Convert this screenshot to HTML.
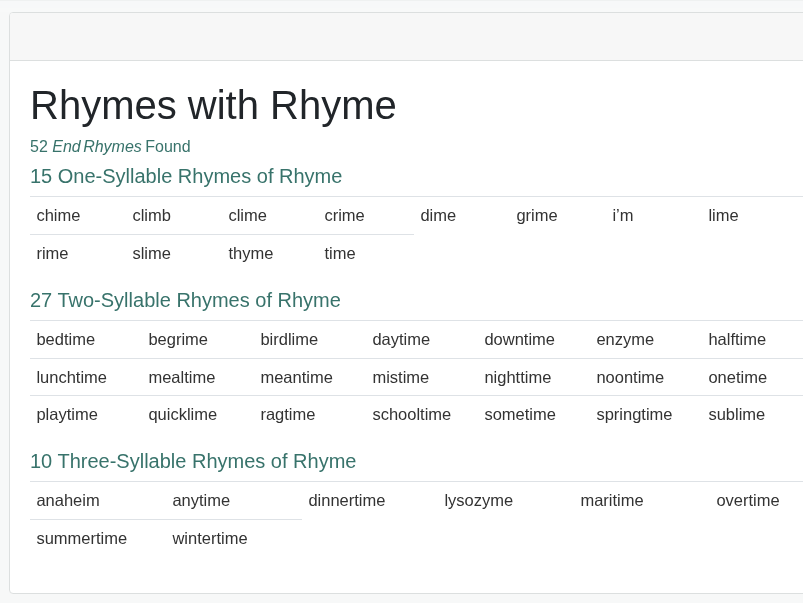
<!DOCTYPE html>
<html>
<head>
<meta charset="utf-8">
<style>
html,body{margin:0;padding:0;}
body{width:803px;height:603px;overflow:hidden;background:#f7f8f8;font-family:"Liberation Sans",sans-serif;color:#212529;position:relative;}
.topline{position:absolute;left:0;top:0;width:803px;height:1px;background:#eff1f1;}
.card{will-change:transform;position:absolute;left:9px;top:12px;width:900px;height:580px;border:1px solid #dcdfdf;border-radius:4px;background:#fff;}
.hdr{height:47px;background:#f7f7f7;border-bottom:1px solid #dcdfdf;border-radius:3px 3px 0 0;}
.body{padding:20px;}
h1{margin:0;font-size:40px;font-weight:normal;line-height:48px;color:#212529;}
.sub{margin:0;font-size:16px;line-height:24px;color:#38736b;}
h5{margin:0;font-size:20px;font-weight:normal;line-height:24px;color:#38736b;}
.t{position:relative;}
.row{display:flex;white-space:nowrap;}
.c{flex:none;box-sizing:border-box;border-top:1px solid #dee2e6;padding:6.4px;font-size:16.5px;line-height:24px;color:#333;}
.up .c{padding-top:5.4px;padding-bottom:7.4px;}
.w96 .c{width:96px;}
.w112 .c{width:112px;}
.w136 .c{width:136px;}
</style>
</head>
<body>
<div class="topline"></div><div style="position:absolute;left:0;top:1px;width:803px;height:7px;background:#f7f8f9"></div><div style="position:absolute;left:0;top:8px;width:803px;height:4px;background:#f8f9f9"></div>
<div class="card">
<div class="hdr"></div>
<div class="body">
<h1 style="margin-bottom:6px">Rhymes with Rhyme</h1>
<div class="sub" style="margin-bottom:5px">52 <i style="word-spacing:-2px">End Rhymes</i><span style="margin-left:-1px"> Found</span></div>
<h5 style="margin-bottom:8px">15 One-Syllable Rhymes of Rhyme</h5>
<div class="t w96" style="margin-bottom:16px">
<div class="row"><div class="c">chime</div><div class="c">climb</div><div class="c">clime</div><div class="c">crime</div><div class="c">dime</div><div class="c">grime</div><div class="c">i’m</div><div class="c">lime</div><div class="c">prime</div><div class="c">rhyme</div><div class="c">ryme</div></div>
<div class="row"><div class="c">rime</div><div class="c">slime</div><div class="c">thyme</div><div class="c">time</div></div>
</div>
<h5 style="margin-bottom:8px">27 Two-Syllable Rhymes of Rhyme</h5>
<div class="t w112" style="margin-bottom:16px;margin-top:0.44px">
<div class="row" style="height:38px"><div class="c">bedtime</div><div class="c">begrime</div><div class="c">birdlime</div><div class="c">daytime</div><div class="c">downtime</div><div class="c">enzyme</div><div class="c">halftime</div><div class="c">lifetime</div><div class="c">longtime</div></div>
<div class="row"><div class="c">lunchtime</div><div class="c">mealtime</div><div class="c">meantime</div><div class="c">mistime</div><div class="c">nighttime</div><div class="c">noontime</div><div class="c">onetime</div><div class="c">pastime</div><div class="c">peacetime</div></div>
<div class="row up"><div class="c">playtime</div><div class="c">quicklime</div><div class="c">ragtime</div><div class="c">schooltime</div><div class="c">sometime</div><div class="c">springtime</div><div class="c">sublime</div><div class="c">wartime</div><div class="c">xylem</div></div>
</div>
<h5 style="margin-bottom:8px">10 Three-Syllable Rhymes of Rhyme</h5>
<div class="t w136">
<div class="row up"><div class="c">anaheim</div><div class="c">anytime</div><div class="c">dinnertime</div><div class="c">lysozyme</div><div class="c">maritime</div><div class="c">overtime</div><div class="c">pantomime</div><div class="c">paradigm</div></div>
<div class="row"><div class="c">summertime</div><div class="c">wintertime</div></div>
</div>
</div>
</div>
</body>
</html>
